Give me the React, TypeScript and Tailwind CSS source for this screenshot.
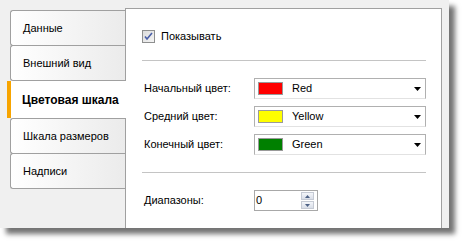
import React from "react";

const font = { fontFamily: '"Liberation Sans", Arial, sans-serif' };

function Tab({ label, first }: { label: string; first?: boolean }) {
  return (
    <div
      className={`ml-[10px] w-[116px] h-[36px] flex items-center pl-[12px] border border-r-0 border-[#a0a0a0] rounded-l-[3px] bg-gradient-to-r from-white to-[#ebebeb] ${
        first ? "" : "-mt-px"
      }`}
    >
      {label}
    </div>
  );
}

function ColorSelect({ color, name }: { color: string; name: string }) {
  return (
    <div className="flex-1 h-[21px] flex items-center border border-[#b0b0b0] border-b-[#e2e2e2] bg-white">
      <span className="ml-[3px] w-[25px] h-[13px] border border-[#9a9a9a]" style={{ background: color }} />
      <span className="ml-[9px] flex-1">{name}</span>
      <svg width="7" height="4" viewBox="0 0 7 4" className="mr-[4px]">
        <path d="M0 0h7L3.5 4z" fill="#000" />
      </svg>
    </div>
  );
}

function Row({ label, children }: { label: string; children: React.ReactNode }) {
  return (
    <div className="flex items-center">
      <span className="w-[112px] pl-[2px]">{label}</span>
      {children}
    </div>
  );
}

export default function App() {
  return (
    <div className="w-[462px] h-[241px] bg-white text-[11px] text-black" style={font}>
      <div className="w-[449px] h-[228px] bg-[#f0f0f0] flex pt-[8px] shadow-[6px_6px_5px_rgba(0,0,0,0.55)]">
        {/* tabs */}
        <div className="w-[126px] flex flex-col pt-[2px]">
          <Tab label="Данные" first />
          <Tab label="Внешний вид" />
          <div className="relative z-10 ml-[7px] w-[120px] h-[37px] flex items-center pl-[11px] bg-white border-l-[4px] border-[#f7a400] font-bold text-[12px]">
            Цветовая шкала
          </div>
          <Tab label="Шкала размеров" first />
          <Tab label="Надписи" />
        </div>

        {/* panel */}
        <div className="w-[317px] -ml-px border border-b-0 border-[#a0a0a0] bg-white pl-[16px] pr-[15px] pt-[21px]">
          <div className="flex items-center h-[13px]">
            <span className="w-[13px] h-[13px] border border-[#8e8f8f] bg-gradient-to-br from-[#dcdcdc] to-[#f4f4f4] flex items-center justify-center">
              <svg width="9" height="9" viewBox="0 0 9 9">
                <path d="M1 4.5l2 2.5L8 1" stroke="#4a5fa8" strokeWidth="1.6" fill="none" />
              </svg>
            </span>
            <span className="ml-[6px]">Показывать</span>
          </div>

          <div className="mt-[17px] h-px bg-[#c4c4c4]" />

          <div className="mt-[17px] flex flex-col gap-[7px]">
            <Row label="Начальный цвет:">
              <ColorSelect color="#ff0000" name="Red" />
            </Row>
            <Row label="Средний цвет:">
              <ColorSelect color="#ffff00" name="Yellow" />
            </Row>
            <Row label="Конечный цвет:">
              <ColorSelect color="#008000" name="Green" />
            </Row>
          </div>

          <div className="mt-[17px] h-px bg-[#c4c4c4]" />

          <div className="mt-[17px]">
            <Row label="Диапазоны:">
              <div className="w-[64px] h-[21px] flex items-center border border-[#a8a8a8] bg-white">
                <span className="ml-[1px] flex-1">0</span>
                <div className="w-[13px] mr-[3px] flex flex-col gap-px">
                  <div className="h-[8px] bg-gradient-to-b from-[#f4f6fa] to-[#d9dee8] border border-[#c5cad4] flex items-center justify-center">
                    <svg width="5" height="3" viewBox="0 0 5 3"><path d="M0 3h5L2.5 0z" fill="#4d6185" /></svg>
                  </div>
                  <div className="h-[8px] bg-gradient-to-b from-[#f4f6fa] to-[#d9dee8] border border-[#c5cad4] flex items-center justify-center">
                    <svg width="5" height="3" viewBox="0 0 5 3"><path d="M0 0h5L2.5 3z" fill="#4d6185" /></svg>
                  </div>
                </div>
              </div>
            </Row>
          </div>
        </div>
      </div>
    </div>
  );
}
